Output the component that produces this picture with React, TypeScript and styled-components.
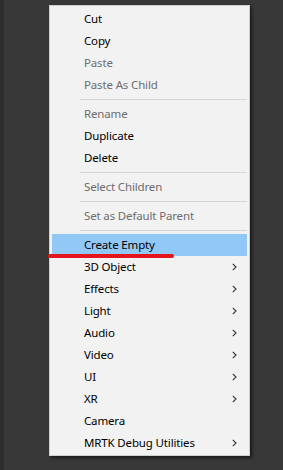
import styled, { createGlobalStyle } from "styled-components";

const GlobalStyle = createGlobalStyle`
    html, body {
        margin: 0;
        padding: 0;
        background-color: #383838;
    }
    body {
        font-family: "Noto Sans", "Liberation Sans", sans-serif;
    }
`;

type Item =
    | { kind: "item"; label: string; disabled?: boolean; sub?: boolean; active?: boolean }
    | { kind: "sep" };

const items: Item[] = [
    { kind: "item", label: "Cut" },
    { kind: "item", label: "Copy" },
    { kind: "item", label: "Paste", disabled: true },
    { kind: "item", label: "Paste As Child", disabled: true },
    { kind: "sep" },
    { kind: "item", label: "Rename", disabled: true },
    { kind: "item", label: "Duplicate" },
    { kind: "item", label: "Delete" },
    { kind: "sep" },
    { kind: "item", label: "Select Children", disabled: true },
    { kind: "sep" },
    { kind: "item", label: "Set as Default Parent", disabled: true },
    { kind: "sep" },
    { kind: "item", label: "Create Empty", active: true },
    { kind: "item", label: "3D Object", sub: true },
    { kind: "item", label: "Effects", sub: true },
    { kind: "item", label: "Light", sub: true },
    { kind: "item", label: "Audio", sub: true },
    { kind: "item", label: "Video", sub: true },
    { kind: "item", label: "UI", sub: true },
    { kind: "item", label: "XR", sub: true },
    { kind: "item", label: "Camera" },
    { kind: "item", label: "MRTK Debug Utilities", sub: true },
];

function Chevron() {
    return (
        <svg width="5" height="8" viewBox="0 0 5 8">
            <path d="M0.8 0.8 L4 4 L0.8 7.2" fill="none" stroke="#3c3c3c" strokeWidth="1.2" />
        </svg>
    );
}

export default function App() {
    return (
        <Page>
            <GlobalStyle />
            <EdgeStrip />
            <Menu>
                {items.map((item, i) =>
                    item.kind === "sep" ? (
                        <Separator key={i} />
                    ) : (
                        <Row key={i} $active={item.active}>
                            <Label $disabled={item.disabled}>{item.label}</Label>
                            {item.sub && <Chevron />}
                            {item.active && <Underline />}
                        </Row>
                    )
                )}
            </Menu>
        </Page>
    );
}

const Page = styled.div`
    width: 283px;
    height: 470px;
    background-color: #383838;
    display: flex;
    align-items: flex-start;
    position: relative;
    overflow: hidden;
`;

const EdgeStrip = styled.div`
    width: 4px;
    height: 100%;
    background-color: #2c2c2c;
`;

const Menu = styled.div`
    margin: 5px 0 0 45px;
    width: 195px;
    padding: 2px 2px 1px 2px;
    background-color: #f2f2f2;
    border: 1px solid #d0d0d0;
    box-shadow: 2px 2px 3px rgba(0, 0, 0, 0.55);
    display: flex;
    flex-direction: column;
`;

const Row = styled.div<{ $active?: boolean }>`
    height: 22px;
    display: flex;
    align-items: center;
    justify-content: space-between;
    padding: 0 10px 1px 32px;
    box-sizing: border-box;
    background-color: ${(p) => (p.$active ? "#92c8f6" : "transparent")};
    position: relative;
`;

const Label = styled.span<{ $disabled?: boolean }>`
    font-size: 11.5px;
    letter-spacing: -0.15px;
    color: ${(p) => (p.$disabled ? "#6d6d6d" : "#000000")};
    white-space: nowrap;
`;

const Separator = styled.div`
    height: 7px;
    margin-left: 28px;
    display: flex;
    align-items: center;

    &::after {
        content: "";
        flex: 1;
        height: 1px;
        background-color: #d5d5d5;
    }
`;

const Underline = styled.div`
    position: absolute;
    left: -4px;
    top: 20px;
    width: 126px;
    height: 4px;
    border-radius: 2px;
    background-color: #e3151a;
`;
